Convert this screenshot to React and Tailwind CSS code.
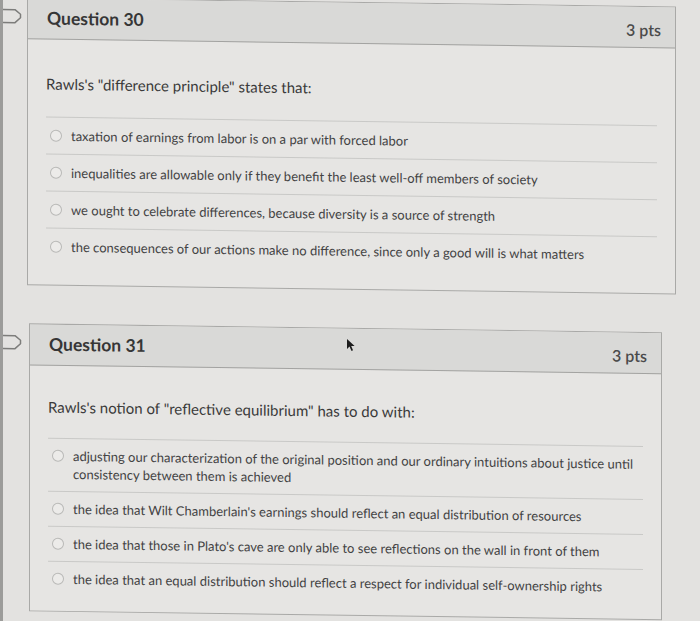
import React from "react";

const questions = [
  {
    number: 30,
    prompt: "Rawls's \"difference principle\" states that:",
    answers: [
      "taxation of earnings from labor is on a par with forced labor",
      "inequalities are allowable only if they benefit the least well-off members of society",
      "we ought to celebrate differences, because diversity is a source of strength",
      "the consequences of our actions make no difference, since only a good will is what matters",
    ],
  },
  {
    number: 31,
    prompt: "Rawls's notion of \"reflective equilibrium\" has to do with:",
    answers: [
      "adjusting our characterization of the original position and our ordinary intuitions about justice until consistency between them is achieved",
      "the idea that Wilt Chamberlain's earnings should reflect an equal distribution of resources",
      "the idea that those in Plato's cave are only able to see reflections on the wall in front of them",
      "the idea that an equal distribution should reflect a respect for individual self-ownership rights",
    ],
  },
];

const Flag = () => (
  <svg width="20" height="16" viewBox="0 0 20 16" className="block">
    <path
      d="M-2 1.5 H12 L17.5 6 V9.5 L12 14.5 H-2"
      fill="none"
      stroke="#7d7d7b"
      strokeWidth="1.5"
      strokeLinejoin="round"
    />
  </svg>
);

// spacing differs a little between the two cards in the photo
const Question = ({ q, gutter, width, mt, pt, gap, rowPy, pb }) => {
  return (
    <div className={`flex ${mt}`}>
      <div className={`${gutter} shrink-0 pt-[11px]`}>
        <Flag />
      </div>
      <div className={`${width} shrink-0 border border-[#a9a9a7] bg-[#e6e5e3]`}>
        <div className="h-[41px] flex items-center justify-between pl-[19px] pr-[14px] bg-[#d9d9d7] border-b border-[#a3a3a1]">
          <h2 className="text-[17.5px] font-bold text-[#363636]">Question {q.number}</h2>
          <span className="text-[16px] font-semibold text-[#4b4b4b] mt-[6px]">3 pts</span>
        </div>
        <div className={`pl-[18px] pr-[18px] ${pt} ${pb}`}>
          <p className="text-[15px] leading-[20px] text-[#3a3a3a]">{q.prompt}</p>
          <div className={gap}>
            {q.answers.map((a, i) => (
              <div
                key={i}
                className={`flex items-start border-t border-[#c9c9c7] ${rowPy}`}
              >
                <span className="ml-[4px] mt-[3px] w-[12px] h-[12px] shrink-0 rounded-full border border-[#b9b9b7] bg-[#ecebe9]" />
                <span className="ml-[9px] text-[13px] leading-[18px] text-[#434343]">
                  {a}
                </span>
              </div>
            ))}
          </div>
        </div>
      </div>
    </div>
  );
};

export default function App() {
  return (
    <div
      className="relative w-[700px] h-[621px] overflow-hidden bg-[#e3e2e0] border-l-[3px] border-[#9c9c9a]"
      style={{ fontFamily: "Lato, 'Open Sans', sans-serif" }}
    >
      <div className="skew-y-[0.8deg] origin-top-left -mt-[3px]">
        <Question
          q={questions[0]}
          gutter="w-[24px]"
          width="w-[649px]"
          mt="mt-0"
          pt="pt-[34px]"
          gap="mt-[23px]"
          rowPy="py-[9px]"
          pb="pb-[20px]"
        />
        <Question
          q={questions[1]}
          gutter="w-[26px]"
          width="w-[633px]"
          mt="mt-[38px]"
          pt="pt-[31px]"
          gap="mt-[21px]"
          rowPy="py-[8px]"
          pb="pb-[15px]"
        />
      </div>
      <svg
        width="10"
        height="14"
        viewBox="0 0 10 14"
        className="absolute left-[343px] top-[338px]"
      >
        <path d="M1 1 L1 11 L3.5 8.6 L5.5 13 L7 12.3 L5.2 8 L8.6 8 Z" fill="#1d1d1d" />
      </svg>
    </div>
  );
}
